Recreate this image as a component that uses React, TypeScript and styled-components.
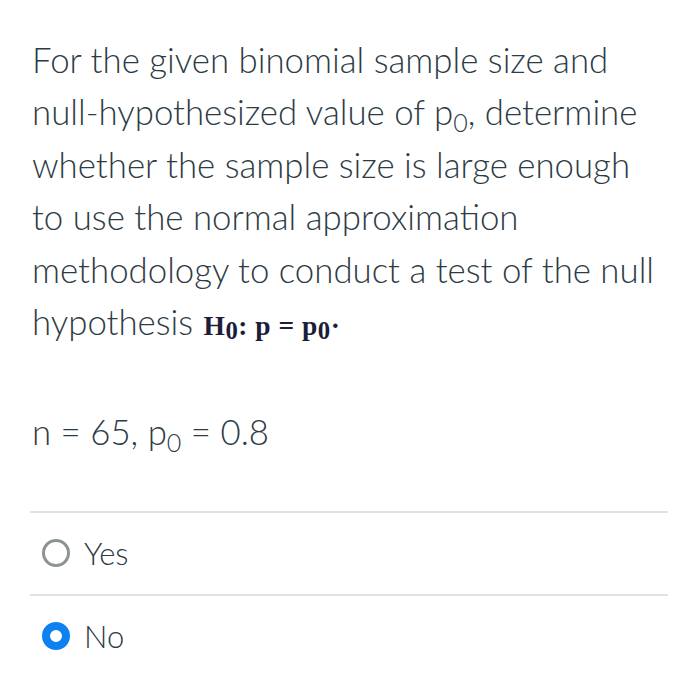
import React from "react";
import styled, { createGlobalStyle } from "styled-components";

const Global = createGlobalStyle`
  html, body { margin: 0; padding: 0; background: #ffffff; }
  body { font-family: Lato, "Open Sans", sans-serif; }
`;

const Page = styled.div`
  width: 695px;
  height: 700px;
  box-sizing: border-box;
  padding: 34px 35px 0 32px;
  color: #2d3b45;
  font-family: Lato, sans-serif;
  font-weight: 300;
`;

const Para = styled.p`
  margin: 0;
  font-size: 34.8px;
  line-height: 52.4px;
`;

const Spaced = styled(Para)`
  margin-top: 49px;
`;

const NoWrap = styled.span`
  white-space: nowrap;
`;

const Sub = styled.sub`
  font-size: 0.72em;
  vertical-align: -0.28em;
  line-height: 0;
`;

const Formula = styled.span`
  font-family: "Liberation Serif", "Times New Roman", serif;
  font-weight: 700;
  font-size: 27.5px;
  letter-spacing: 0.5px;
  color: #1d1d3a;
  margin-left: 1px;
`;

const FSub = styled.span`
  font-size: 0.9em;
  vertical-align: -0.16em;
`;

const Answers = styled.div`
  margin-top: 52px;
  margin-left: -2px;
  width: 638px;
`;

const Option = styled.label`
  display: flex;
  align-items: center;
  gap: 14px;
  height: 81px;
  border-top: 2px solid #dfe1e3;
  padding-left: 12px;
  font-size: 31px;
  font-weight: 300;
  color: #2d3b45;
`;

const Radio = styled.span<{ $checked?: boolean }>`
  box-sizing: border-box;
  width: 28px;
  height: 28px;
  border-radius: 50%;
  flex: none;
  border: ${(p) => (p.$checked ? "8px solid #0d80f2" : "3px solid #8d9295")};
  background: #ffffff;
`;

export default function App() {
  return (
    <Page>
      <Global />
      <Para>
        For the given binomial sample size and <NoWrap>null-hypothesized</NoWrap>{" "}
        value of p<Sub>0</Sub>, determine whether the sample size is large
        enough to use the normal approximation methodology to conduct a test of
        the null hypothesis{" "}
        <Formula>
          H<FSub>0</FSub>: p = p<FSub>0</FSub>·
        </Formula>
      </Para>
      <Spaced>
        n = 65, p<Sub>0</Sub> = 0.8
      </Spaced>
      <Answers>
        <Option>
          <Radio />
          Yes
        </Option>
        <Option>
          <Radio $checked />
          No
        </Option>
      </Answers>
    </Page>
  );
}
